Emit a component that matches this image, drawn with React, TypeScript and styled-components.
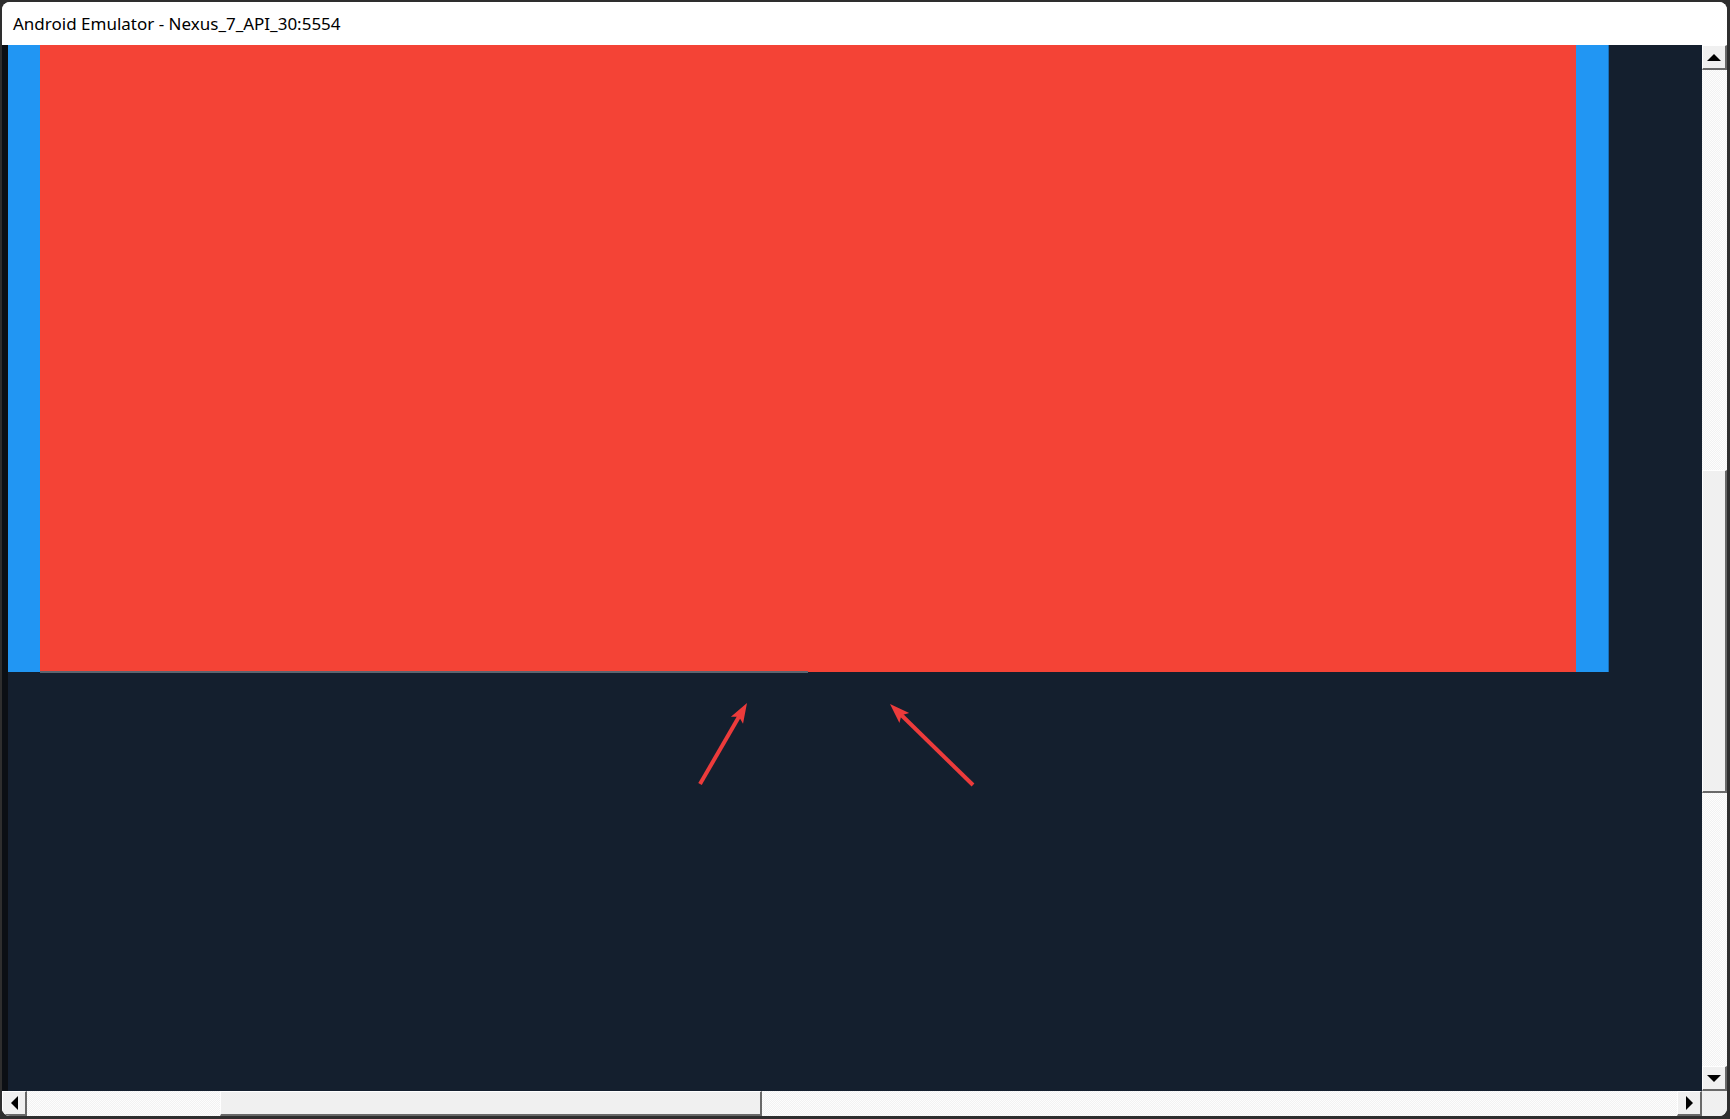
import React from "react";
import styled, { createGlobalStyle } from "styled-components";

const GlobalStyle = createGlobalStyle`
  html, body {
    margin: 0;
    padding: 0;
    background: #2e2e2e;
    overflow: hidden;
  }
`;

const Desktop = styled.div`
  width: 1730px;
  height: 1119px;
  box-sizing: border-box;
  padding: 2px 3px 3px 2px;
  background: #2e2e2e;
`;

const Window = styled.div`
  height: 100%;
  display: flex;
  flex-direction: column;
  border-radius: 8px;
  overflow: hidden;
  background: #ffffff;
`;

const TitleBar = styled.div`
  height: 43px;
  flex: none;
  display: flex;
  align-items: center;
  padding-left: 11px;
  background: #ffffff;
`;

const Title = styled.span`
  font-family: "Noto Sans", "Open Sans", sans-serif;
  font-size: 17px;
  color: #000000;
`;

const Body = styled.div`
  flex: 1;
  display: flex;
  min-height: 0;
`;

const Viewport = styled.div`
  position: relative;
  flex: 1;
  background: #141f2e;
  border-left: 6px solid #0b0f14;
`;

const Screen = styled.div`
  width: 1601px;
  height: 627px;
  box-sizing: border-box;
  padding: 0 32px;
  background: #2196f3;
  border-right: 1px solid #1a6fb5;
`;

const Panel = styled.div`
  height: 100%;
  display: flex;
  flex-direction: column;
  justify-content: flex-end;
  background: #f44336;
`;

const Progress = styled.div<{ $value: number }>`
  height: 2px;
  width: ${(p) => p.$value * 100}%;
  background: #5d6570;
  transform: translateY(1px);
`;

const Annotations = styled.svg`
  position: absolute;
  left: 0;
  top: 0;
  width: 100%;
  height: 100%;
  pointer-events: none;
`;

const trackTexture = `
  background: repeating-conic-gradient(#f2f2f2 0 25%, #fdfdfd 0 50%) 0 0 / 2px 2px;
`;

const VScroll = styled.div`
  width: 25px;
  flex: none;
  display: flex;
  flex-direction: column;
`;

const VTrack = styled.div`
  flex: 1;
  ${trackTexture}
`;

const HScroll = styled.div`
  height: 25px;
  flex: none;
  display: flex;
`;

const HTrack = styled.div`
  flex: 1;
  display: flex;
  ${trackTexture}
`;

const Bevel = styled.div`
  box-sizing: border-box;
  background: #f0f0f0;
  border-top: 1px solid #ffffff;
  border-left: 1px solid #ffffff;
  border-right: 2px solid #696969;
  border-bottom: 2px solid #696969;
`;

const ArrowButton = styled(Bevel)`
  width: 25px;
  height: 25px;
  flex: none;
  display: flex;
  align-items: center;
  justify-content: center;
`;

const VThumb = styled(Bevel)<{ $offset: number; $size: number }>`
  margin-top: ${(p) => p.$offset}px;
  height: ${(p) => p.$size}px;
`;

const HThumb = styled(Bevel)<{ $offset: number; $size: number }>`
  margin-left: ${(p) => p.$offset}px;
  width: ${(p) => p.$size}px;
`;

const Corner = styled.div`
  width: 25px;
  flex: none;
  background: #f0f0f0;
`;

type Dir = "up" | "down" | "left" | "right";

const triangles: Record<Dir, string> = {
  up: "0,7 7,0 14,7",
  down: "0,0 14,0 7,7",
  left: "7,0 7,14 0,7",
  right: "0,0 0,14 7,7",
};

const Arrow = ({ dir }: { dir: Dir }) => {
  const vertical = dir === "up" || dir === "down";
  return (
    <ArrowButton>
      <svg width={vertical ? 14 : 7} height={vertical ? 7 : 14}>
        <polygon points={triangles[dir]} fill="#000" />
      </svg>
    </ArrowButton>
  );
};

type Pt = [number, number];

const head = (tail: Pt, tip: Pt, len = 20, half = 7) => {
  const dx = tip[0] - tail[0];
  const dy = tip[1] - tail[1];
  const d = Math.hypot(dx, dy);
  const ux = dx / d;
  const uy = dy / d;
  const bx = tip[0] - ux * len;
  const by = tip[1] - uy * len;
  return `${tip[0]},${tip[1]} ${bx - uy * half},${by + ux * half} ${bx + ux * 4},${by + uy * 4} ${bx + uy * half},${by - ux * half}`;
};

// offsets are relative to the emulator viewport (page x - 8, page y - 45)
const pointers: { tail: Pt; tip: Pt }[] = [
  { tail: [692, 739], tip: [739, 658] },
  { tail: [965, 740], tip: [882, 659] },
];

export default function App() {
  return (
    <>
      <GlobalStyle />
      <Desktop>
        <Window>
          <TitleBar>
            <Title>Android Emulator - Nexus_7_API_30:5554</Title>
          </TitleBar>
          <Body>
            <Viewport>
              <Screen>
                <Panel>
                  <Progress $value={0.5} />
                </Panel>
              </Screen>
              <Annotations>
                {pointers.map((a, i) => {
                  const dx = a.tip[0] - a.tail[0];
                  const dy = a.tip[1] - a.tail[1];
                  const d = Math.hypot(dx, dy);
                  const end: Pt = [a.tip[0] - (dx / d) * 14, a.tip[1] - (dy / d) * 14];
                  return (
                    <g key={i}>
                      <line
                        x1={a.tail[0]}
                        y1={a.tail[1]}
                        x2={end[0]}
                        y2={end[1]}
                        stroke="#ec3b3b"
                        strokeWidth={4}
                      />
                      <polygon points={head(a.tail, a.tip)} fill="#ec3b3b" />
                    </g>
                  );
                })}
              </Annotations>
            </Viewport>
            <VScroll>
              <Arrow dir="up" />
              <VTrack>
                <VThumb $offset={400} $size={323} />
              </VTrack>
              <Arrow dir="down" />
            </VScroll>
          </Body>
          <HScroll>
            <Arrow dir="left" />
            <HTrack>
              <HThumb $offset={193} $size={542} />
            </HTrack>
            <Arrow dir="right" />
            <Corner />
          </HScroll>
        </Window>
      </Desktop>
    </>
  );
}
